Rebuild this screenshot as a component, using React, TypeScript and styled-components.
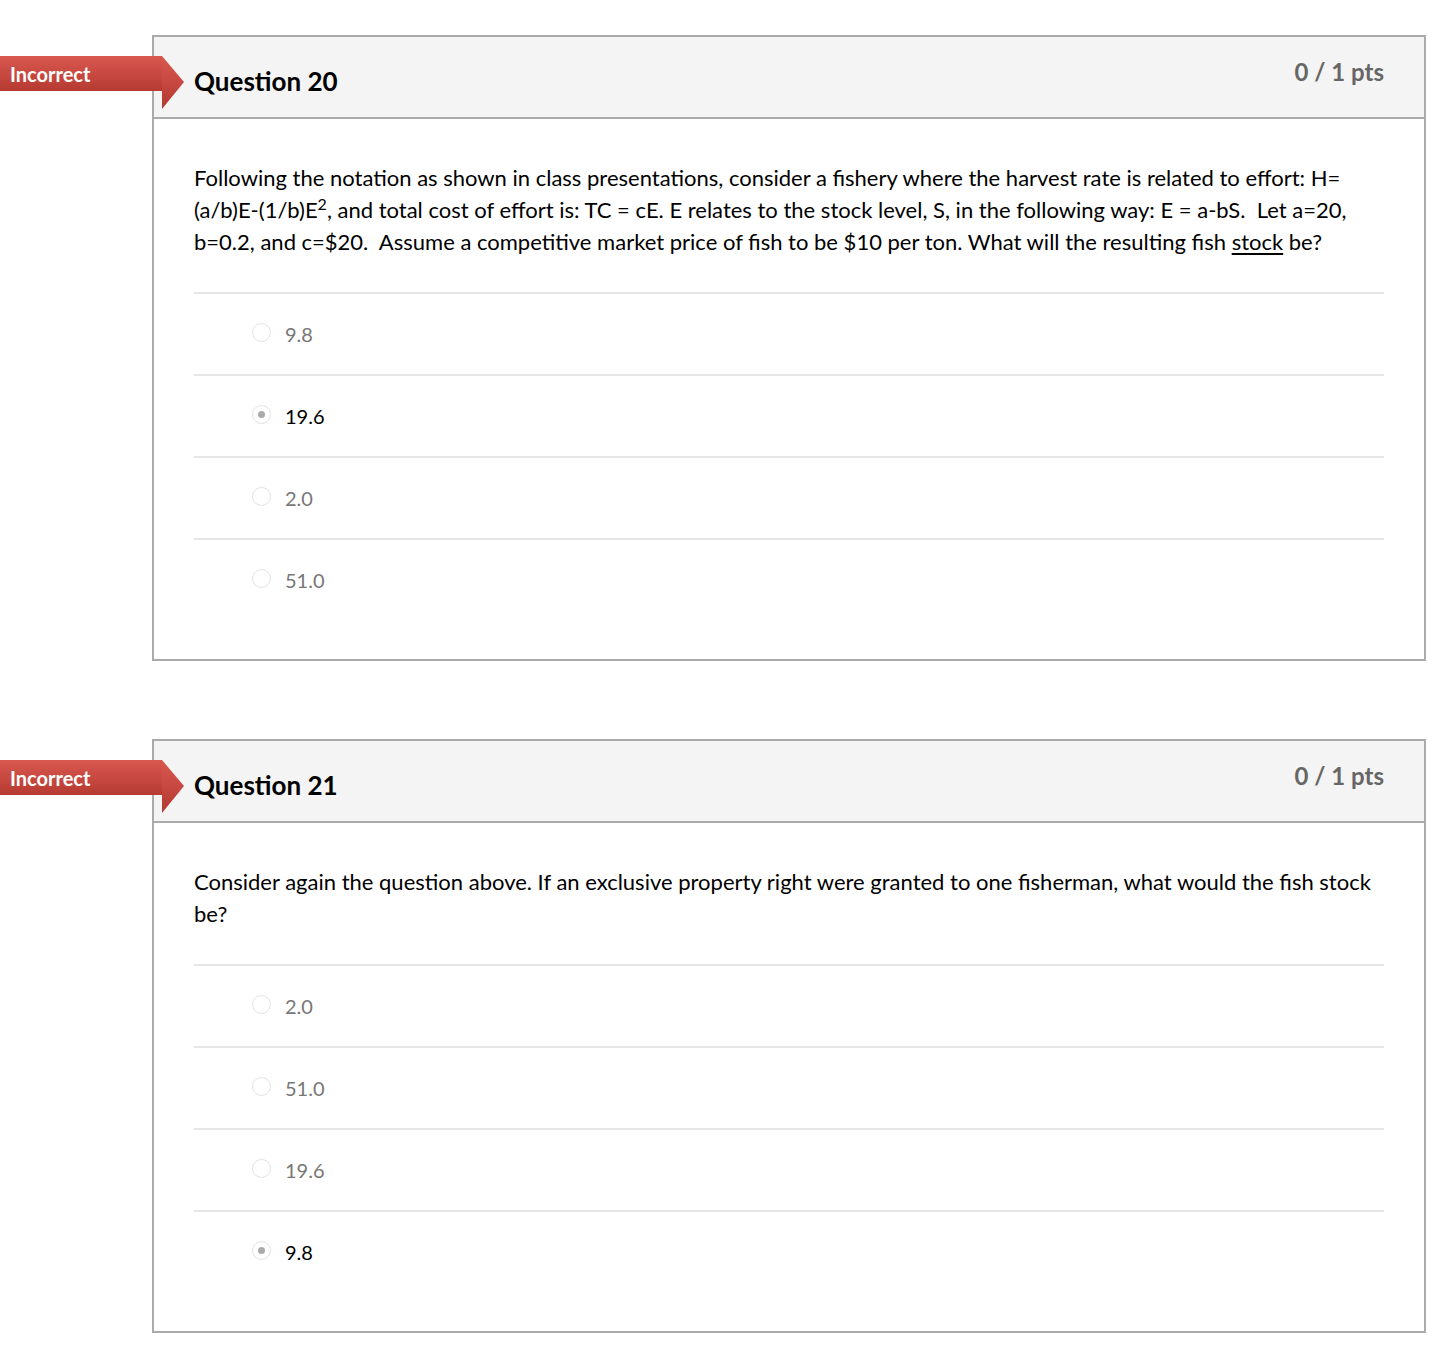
import * as React from 'react';
import styled, { createGlobalStyle } from 'styled-components';

const GlobalStyle = createGlobalStyle`
body {
  margin: 0;
  background: #fff;
  font-family: Lato, "Open Sans", sans-serif;
  color: #000;
}
`;

interface Answer {
  text: string;
  selected?: boolean;
}

interface Question {
  number: number;
  points: string;
  text: React.ReactNode;
  answers: Answer[];
}

const Page = styled.div`
  display: flex;
  flex-direction: column;
  gap: 78px;
  padding: 35px 28px 26px 152px;
`;

const Card = styled.div`
  position: relative;
  border: 2px solid #aaa;
  background: #fff;
`;

const Badge = styled.div`
  position: absolute;
  left: -154px;
  top: 19px;
  width: 184px;
  height: 53px;
`;

const BadgeBar = styled.div`
  width: 162px;
  height: 35px;
  box-sizing: border-box;
  padding-left: 10px;
  display: flex;
  align-items: center;
  background: linear-gradient(#d95850, #b63a31);
  color: #fff;
  font-weight: 700;
  font-size: 20px;
`;

const BadgeArrow = styled.svg`
  position: absolute;
  left: 162px;
  top: 0;
`;

const Header = styled.div`
  height: 80px;
  display: flex;
  justify-content: space-between;
  padding: 0 40px;
  background: #f4f4f4;
  border-bottom: 2px solid #aaa;
`;

const Title = styled.h2`
  margin: 0;
  padding-top: 28px;
  font-size: 26px;
  font-weight: 700;
  line-height: 32px;
`;

const Points = styled.div`
  padding-top: 19px;
  font-size: 24px;
  font-weight: 700;
  line-height: 32px;
  color: #666;
`;

const Body = styled.div`
  padding: 43px 40px 39px;
`;

const Text = styled.div`
  font-size: 22px;
  line-height: 32px;
  padding-bottom: 34px;

  sup {
    font-size: 16px;
    line-height: 0;
  }
  u {
    text-underline-offset: 3px;
  }
`;

const Row = styled.div<{ $selected?: boolean }>`
  height: 80px;
  display: flex;
  align-items: center;
  gap: 14px;
  padding-left: 58px;
  border-top: 2px solid #e6e6e6;
  font-size: 20px;
  color: ${p => (p.$selected ? '#000' : '#777')};
`;

const Radio = styled.span<{ $selected?: boolean }>`
  width: 17px;
  height: 17px;
  margin-top: -3px;
  border-radius: 50%;
  border: 1px solid #e2e2e2;
  background: #fff;
  display: flex;
  align-items: center;
  justify-content: center;

  &::after {
    content: '';
    width: 7px;
    height: 7px;
    border-radius: 50%;
    background: ${p => (p.$selected ? '#aaa' : 'transparent')};
  }
`;

const questions: Question[] = [
  {
    number: 20,
    points: '0 / 1 pts',
    text: (
      <>
        Following the notation as shown in class presentations, consider a fishery where the harvest rate is related to effort: H=
        (a/b)E-(1/b)E<sup>2</sup>, and total cost of effort is: TC = cE. E relates to the stock level, S, in the following way: E = a-bS.&nbsp; Let a=20,
        b=0.2, and c=$20.&nbsp; Assume a competitive market price of fish to be $10 per ton. What will the resulting fish <u>stock</u> be?
      </>
    ),
    answers: [{ text: '9.8' }, { text: '19.6', selected: true }, { text: '2.0' }, { text: '51.0' }],
  },
  {
    number: 21,
    points: '0 / 1 pts',
    text: 'Consider again the question above. If an exclusive property right were granted to one fisherman, what would the fish stock be?',
    answers: [{ text: '2.0' }, { text: '51.0' }, { text: '19.6' }, { text: '9.8', selected: true }],
  },
];

const IncorrectBadge = () => (
  <Badge>
    <BadgeBar>Incorrect</BadgeBar>
    <BadgeArrow width="23" height="53" viewBox="0 0 23 53">
      <defs>
        <linearGradient id="arrowGrad" x1="0" y1="0" x2="0" y2="1">
          <stop offset="0" stopColor="#d95850" />
          <stop offset="1" stopColor="#b33830" />
        </linearGradient>
      </defs>
      <polygon points="0,0 22,26 0,53" fill="url(#arrowGrad)" />
    </BadgeArrow>
  </Badge>
);

const App: React.FC = () => (
  <Page>
    <GlobalStyle />
    {questions.map(q => (
      <Card key={q.number}>
        <IncorrectBadge />
        <Header>
          <Title>Question {q.number}</Title>
          <Points>{q.points}</Points>
        </Header>
        <Body>
          <Text>{q.text}</Text>
          {q.answers.map(a => (
            <Row key={a.text} $selected={a.selected}>
              <Radio $selected={a.selected} />
              {a.text}
            </Row>
          ))}
        </Body>
      </Card>
    ))}
  </Page>
);

export default App;
